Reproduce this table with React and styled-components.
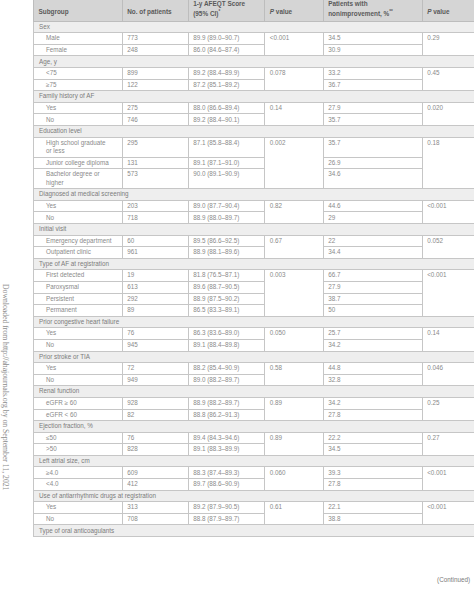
import React from 'react';
import styled, { createGlobalStyle } from 'styled-components';

const GlobalStyle = createGlobalStyle`
  html, body {
    margin: 0;
    padding: 0;
    overflow: hidden;
    background: #ffffff;
  }
  body {
    font-family: "Liberation Sans", Arial, sans-serif;
  }
`;

const groups = [
  {
    title: 'Sex',
    p1: '<0.001',
    p2: '0.29',
    rows: [
      ['Male', '773', '89.9 (89.0–90.7)', '34.5'],
      ['Female', '248', '86.0 (84.6–87.4)', '30.9'],
    ],
  },
  {
    title: 'Age, y',
    p1: '0.078',
    p2: '0.45',
    rows: [
      ['<75', '899', '89.2 (88.4–89.9)', '33.2'],
      ['≥75', '122', '87.2 (85.1–89.2)', '36.7'],
    ],
  },
  {
    title: 'Family history of AF',
    p1: '0.14',
    p2: '0.020',
    rows: [
      ['Yes', '275', '88.0 (86.6–89.4)', '27.9'],
      ['No', '746', '89.2 (88.4–90.1)', '35.7'],
    ],
  },
  {
    title: 'Education level',
    p1: '0.002',
    p2: '0.18',
    rows: [
      [['High school graduate', 'or less'], '295', '87.1 (85.8–88.4)', '35.7'],
      ['Junior college diploma', '131', '89.1 (87.1–91.0)', '26.9'],
      [['Bachelor degree or', 'higher'], '573', '90.0 (89.1–90.9)', '34.6'],
    ],
  },
  {
    title: 'Diagnosed at medical screening',
    p1: '0.82',
    p2: '<0.001',
    rows: [
      ['Yes', '203', '89.0 (87.7–90.4)', '44.6'],
      ['No', '718', '88.9 (88.0–89.7)', '29'],
    ],
  },
  {
    title: 'Initial visit',
    p1: '0.67',
    p2: '0.052',
    rows: [
      ['Emergency department', '60', '89.5 (86.6–92.5)', '22'],
      ['Outpatient clinic', '961', '88.9 (88.1–89.6)', '34.4'],
    ],
  },
  {
    title: 'Type of AF at registration',
    p1: '0.003',
    p2: '<0.001',
    rows: [
      ['First detected', '19', '81.8 (76.5–87.1)', '66.7'],
      ['Paroxysmal', '613', '89.6 (88.7–90.5)', '27.9'],
      ['Persistent', '292', '88.9 (87.5–90.2)', '38.7'],
      ['Permanent', '89', '86.5 (83.3–89.1)', '50'],
    ],
  },
  {
    title: 'Prior congestive heart failure',
    p1: '0.050',
    p2: '0.14',
    rows: [
      ['Yes', '76', '86.3 (83.6–89.0)', '25.7'],
      ['No', '945', '89.1 (88.4–89.8)', '34.2'],
    ],
  },
  {
    title: 'Prior stroke or TIA',
    p1: '0.58',
    p2: '0.046',
    rows: [
      ['Yes', '72', '88.2 (85.4–90.9)', '44.8'],
      ['No', '949', '89.0 (88.2–89.7)', '32.8'],
    ],
  },
  {
    title: 'Renal function',
    p1: '0.89',
    p2: '0.25',
    rows: [
      ['eGFR ≥ 60', '928', '88.9 (88.2–89.7)', '34.2'],
      ['eGFR < 60', '82', '88.8 (86.2–91.3)', '27.8'],
    ],
  },
  {
    title: 'Ejection fraction, %',
    p1: '0.89',
    p2: '0.27',
    rows: [
      ['≤50', '76', '89.4 (84.3–94.6)', '22.2'],
      ['>50', '828', '89.1 (88.3–89.9)', '34.5'],
    ],
  },
  {
    title: 'Left atrial size, cm',
    p1: '0.060',
    p2: '<0.001',
    rows: [
      ['≥4.0', '609', '88.3 (87.4–89.3)', '39.3'],
      ['<4.0', '412', '89.7 (88.6–90.9)', '27.8'],
    ],
  },
  {
    title: 'Use of antiarrhythmic drugs at registration',
    p1: '0.61',
    p2: '<0.001',
    rows: [
      ['Yes', '313', '89.2 (87.9–90.5)', '22.1'],
      ['No', '708', '88.8 (87.9–89.7)', '38.8'],
    ],
  },
  {
    title: 'Type of oral anticoagulants',
    rows: [],
  },
];

const Page = styled.div`
  position: relative;
  width: 474px;
  height: 591px;
  padding-left: 33px;
  box-sizing: border-box;
  display: flex;
  flex-direction: column;
  overflow: hidden;
`;

const Watermark = styled.div`
  position: absolute;
  left: 1px;
  top: 284px;
  writing-mode: vertical-rl;
  font-family: "Liberation Serif", "Times New Roman", serif;
  font-size: 7.7px;
  line-height: 8px;
  color: #8c8c8c;
  white-space: nowrap;
`;

const Table = styled.table`
  margin-top: -4px;
  width: 470px;
  flex-shrink: 0;
  border-collapse: collapse;
  table-layout: fixed;
  font-size: 6.3px;
  color: #8a8a8a;
`;

const HeadRow = styled.tr`
  height: 24.7px;
  background: #d5d5d5;
`;

const HeadCell = styled.th`
  border: 1px solid #bdbdbd;
  padding: 0 4.5px ${(p) => (p.$single ? '3.3px' : '1.3px')};
  vertical-align: bottom;
  text-align: left;
  font-weight: bold;
  font-size: 6.4px;
  line-height: 10.3px;
  color: #5a5a5a;
  white-space: nowrap;
  em {
    font-style: italic;
  }
  sup {
    font-size: 4.5px;
    line-height: 0;
  }
`;

const SectionRow = styled.tr`
  background: #eeeeee;
`;

const SectionCell = styled.td`
  border: 1px solid #c6c6c6;
  padding: 1.1px 5px;
  line-height: 8.4px;
  color: #7c7c7c;
  white-space: nowrap;
`;

const Cell = styled.td`
  border: 1px solid #c6c6c6;
  padding: 1.1px 4.5px 1.1px ${(p) => (p.$indent ? '12px' : '4.5px')};
  line-height: 8.4px;
  vertical-align: top;
  white-space: nowrap;
  background: #ffffff;
`;

const Footer = styled.div`
  margin-top: 39px;
  width: 437px;
  text-align: right;
  font-size: 6.3px;
  line-height: 8px;
  color: #7a7a7a;
`;

const Label = ({ text }) =>
  Array.isArray(text) ? (
    <>
      {text[0]}
      <br />
      {text[1]}
    </>
  ) : (
    text
  );

export default function App() {
  return (
    <>
      <GlobalStyle />
      <Page>
        <Watermark>Downloaded from http://ahajournals.org by on September 11, 2021</Watermark>
        <Table>
          <colgroup>
            <col style={{ width: '88.7px' }} />
            <col style={{ width: '66px' }} />
            <col style={{ width: '76.6px' }} />
            <col style={{ width: '58.4px' }} />
            <col style={{ width: '99px' }} />
            <col style={{ width: '81.3px' }} />
          </colgroup>
          <thead>
            <HeadRow>
              <HeadCell $single>Subgroup</HeadCell>
              <HeadCell $single>No. of patients</HeadCell>
              <HeadCell>
                1-y AFEQT Score
                <br />
                (95% CI)<sup>*</sup>
              </HeadCell>
              <HeadCell $single>
                <em>P</em> value
              </HeadCell>
              <HeadCell>
                Patients with
                <br />
                nonimprovement, %<sup>**</sup>
              </HeadCell>
              <HeadCell $single>
                <em>P</em> value
              </HeadCell>
            </HeadRow>
          </thead>
          <tbody>
            {groups.map((g) => (
              <React.Fragment key={g.title}>
                <SectionRow>
                  <SectionCell colSpan={6}>{g.title}</SectionCell>
                </SectionRow>
                {g.rows.map((r, i) => (
                  <tr key={i}>
                    <Cell $indent>
                      <Label text={r[0]} />
                    </Cell>
                    <Cell>{r[1]}</Cell>
                    <Cell>{r[2]}</Cell>
                    {i === 0 && <Cell rowSpan={g.rows.length}>{g.p1}</Cell>}
                    <Cell>{r[3]}</Cell>
                    {i === 0 && <Cell rowSpan={g.rows.length}>{g.p2}</Cell>}
                  </tr>
                ))}
              </React.Fragment>
            ))}
          </tbody>
        </Table>
        <Footer>(Continued)</Footer>
      </Page>
    </>
  );
}
